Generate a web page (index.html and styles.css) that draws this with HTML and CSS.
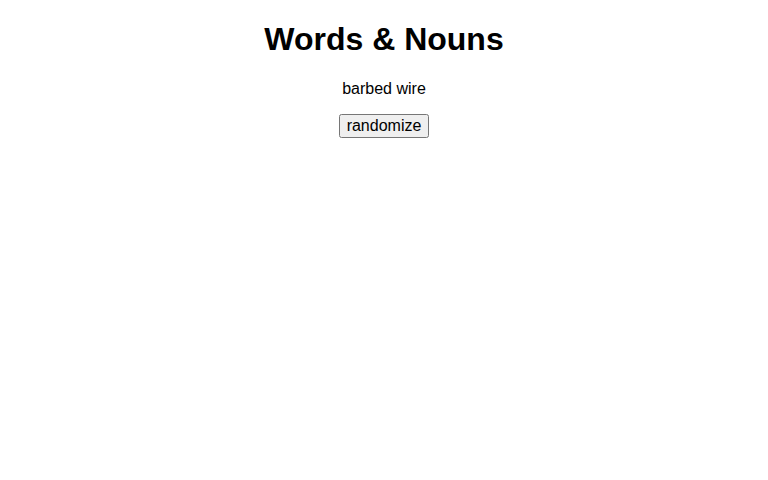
FILE: index.html
```html
<!DOCTYPE html>
<html lang="en">
<head>
    <meta charset="UTF-8">
    <meta name="viewport" content="width=device-width, initial-scale=1.0">
    <title>Words &amp; Nouns</title>
    <link rel="stylesheet" href="styles.css">
</head>
<body>
    <div class="app">
        <h1>Words &amp; Nouns</h1>
        <p id="word" class="word">barbed wire</p>
        <p class="controls">
            <button id="randomize" class="randomize">randomize</button>
        </p>
    </div>
</body>
</html>
```

FILE: styles.css
```css
body {
    margin: 0;
    font-family: "Liberation Sans", Arial, sans-serif;
}

.app {
    text-align: center;
}

h1 {
    font-size: 32px;
}

.word {
    font-size: 16px;
}

.randomize {
    font-family: "Liberation Sans", Arial, sans-serif;
    font-size: 16px;
}
```
